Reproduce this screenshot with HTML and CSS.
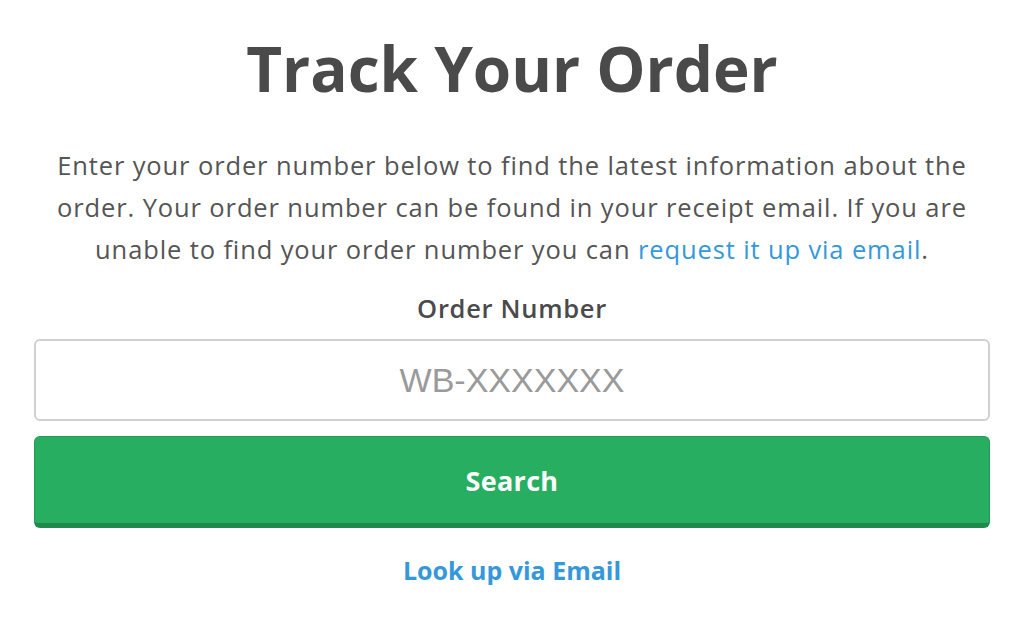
FILE: index.html
```html
<!DOCTYPE html>
<html>
<head>
<meta charset="utf-8">
<link rel="stylesheet" href="styles.css">
</head>
<body>
<main class="track">
  <h1 class="title">Track Your Order</h1>
  <p class="intro">Enter your order number below to find the latest information about the order. Your order number can be found in your receipt email. If you are unable to find your order number you can <a href="#" class="link">request it up via email</a>.</p>
  <label class="label" for="order">Order Number</label>
  <input id="order" class="field" type="text" placeholder="WB-XXXXXXX">
  <button class="btn" type="button">Search</button>
  <a href="#" class="lookup">Look up via Email</a>
</main>
</body>
</html>
```

FILE: styles.css
```css
html, body {
  margin: 0;
  padding: 0;
  background: #ffffff;
}
body {
  font-family: "Open Sans", "Liberation Sans", sans-serif;
  color: #4a4a4a;
}
.track {
  display: flex;
  flex-direction: column;
  align-items: stretch;
  padding: 26px 34px 0 34px;
  text-align: center;
}
.title {
  margin: 0;
  font-size: 62px;
  line-height: 84px;
  font-weight: 700;
  color: #4a4a4a;
}
.intro {
  margin: 34px 0 0 0;
  font-size: 25.5px;
  line-height: 42px;
  letter-spacing: 0.88px;
  color: #555555;
  padding: 0 8px;
}
.link {
  color: #3498db;
  text-decoration: none;
}
.label {
  margin-top: 23px;
  font-size: 25.5px;
  line-height: 30px;
  font-weight: 600;
  letter-spacing: 0.7px;
  color: #4a4a4a;
}
.field {
  margin-top: 16px;
  height: 82px;
  box-sizing: border-box;
  border: 2px solid #d0d0d0;
  border-radius: 6px;
  font-family: "Liberation Sans", Arial, sans-serif;
  font-size: 34px;
  text-align: center;
  color: #444;
  background: #fff;
  outline: none;
}
.field::placeholder {
  color: #9a9a9a;
}
.btn {
  margin-top: 15px;
  height: 92px;
  box-sizing: border-box;
  border: 1px solid #229a54;
  border-bottom: 5px solid #1f8a4c;
  border-radius: 6px;
  background: #27ae60;
  color: #ffffff;
  font-family: "Open Sans", "Liberation Sans", sans-serif;
  font-size: 27px;
  font-weight: 700;
  letter-spacing: 0.3px;
  cursor: pointer;
}
.lookup {
  margin-top: 27px;
  font-size: 25px;
  line-height: 30px;
  font-weight: 700;
  color: #3498db;
  text-decoration: none;
  align-self: center;
}
```
